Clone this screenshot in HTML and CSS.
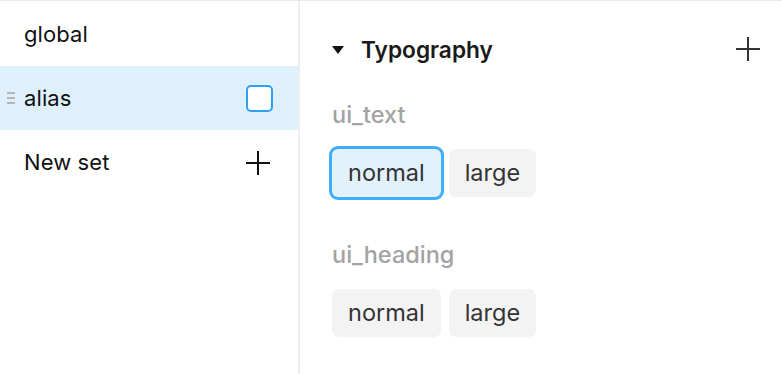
FILE: index.html
```html
<!DOCTYPE html>
<html>
<head>
<meta charset="utf-8">
<link rel="stylesheet" href="styles.css">
</head>
<body>
<div class="app">
  <aside class="sidebar">
    <div class="set-row"><span class="set-name">global</span></div>
    <div class="set-row active">
      <span class="drag"><i></i><i></i><i></i></span>
      <span class="set-name">alias</span>
      <span class="checkbox"></span>
    </div>
    <div class="set-row">
      <span class="set-name">New set</span>
      <svg class="plus side-plus" width="24" height="24" viewBox="0 0 24 24"><path d="M12 0v24M0 12h24" stroke="#111" stroke-width="2" fill="none"/></svg>
    </div>
  </aside>
  <main class="content">
    <div class="section-head">
      <svg class="caret" width="12" height="9" viewBox="0 0 12 9"><path d="M0 0h12L6 8z" fill="#111"/></svg>
      <span class="section-title">Typography</span>
      <svg class="plus add" width="24" height="24" viewBox="0 0 24 24"><path d="M12 0v24M0 12h24" stroke="#333" stroke-width="2" fill="none"/></svg>
    </div>
    <div class="group">
      <div class="group-label">ui_text</div>
      <div class="chips">
        <span class="chip selected">normal</span>
        <span class="chip">large</span>
      </div>
    </div>
    <div class="group">
      <div class="group-label">ui_heading</div>
      <div class="chips">
        <span class="chip">normal</span>
        <span class="chip">large</span>
      </div>
    </div>
  </main>
</div>
</body>
</html>
```
FILE: styles.css
```css
* { box-sizing: border-box; }
html, body { margin: 0; padding: 0; background: #fff; }
body {
  font-family: Inter, "Noto Sans", sans-serif;
  color: #111;
  width: 782px;
  height: 374px;
  overflow: hidden;
}
.app {
  display: flex;
  height: 374px;
  border-top: 1px solid #ebebeb;
}
.sidebar {
  width: 300px;
  flex: none;
  border-right: 2px solid #eeeeee;
  padding-top: 1px;
}
.set-row {
  position: relative;
  display: flex;
  align-items: center;
  height: 64px;
  padding: 0 25px 0 24px;
}
.set-row.active { background: #dff0fd; }
.set-name {
  flex: 1;
  font-size: 22px;
  font-weight: 400;
  letter-spacing: 0.1px;
}
.drag {
  position: absolute;
  left: 7px;
  top: 26px;
  display: flex;
  flex-direction: column;
  gap: 3px;
}
.drag i {
  display: block;
  width: 8px;
  height: 2px;
  background: #b5b5b5;
}
.checkbox {
  width: 27px;
  height: 27px;
  border: 2px solid #2ea0f5;
  border-radius: 5px;
  background: #fff;
}
.plus { flex: none; }
.side-plus { margin: 2px 3px 0 0; }
.content {
  flex: 1;
  padding: 24px 22px 0 32px;
}
.section-head {
  display: flex;
  align-items: center;
  height: 48px;
}
.caret { margin: 2px 17px 0 0; }
.section-title {
  flex: 1;
  font-size: 22.7px;
  font-weight: 600;
  color: #1a1a1a;
}
.group { margin-top: 27px; }
.group + .group { margin-top: 43px; }
.group-label {
  font-size: 23.5px;
  font-weight: 500;
  color: #a3a3a3;
  height: 30px;
  line-height: 30px;
}
.chips {
  display: flex;
  gap: 8px;
  margin-top: 19px;
}
.chip {
  height: 48px;
  line-height: 48px;
  padding: 0 16px;
  border-radius: 7px;
  background: #f3f3f3;
  font-size: 23.5px;
  color: #333;
}
.chip.selected {
  background: #e1f2fd;
  box-shadow: 0 0 0 3px #40adf7;
  border-radius: 6px;
}
```
